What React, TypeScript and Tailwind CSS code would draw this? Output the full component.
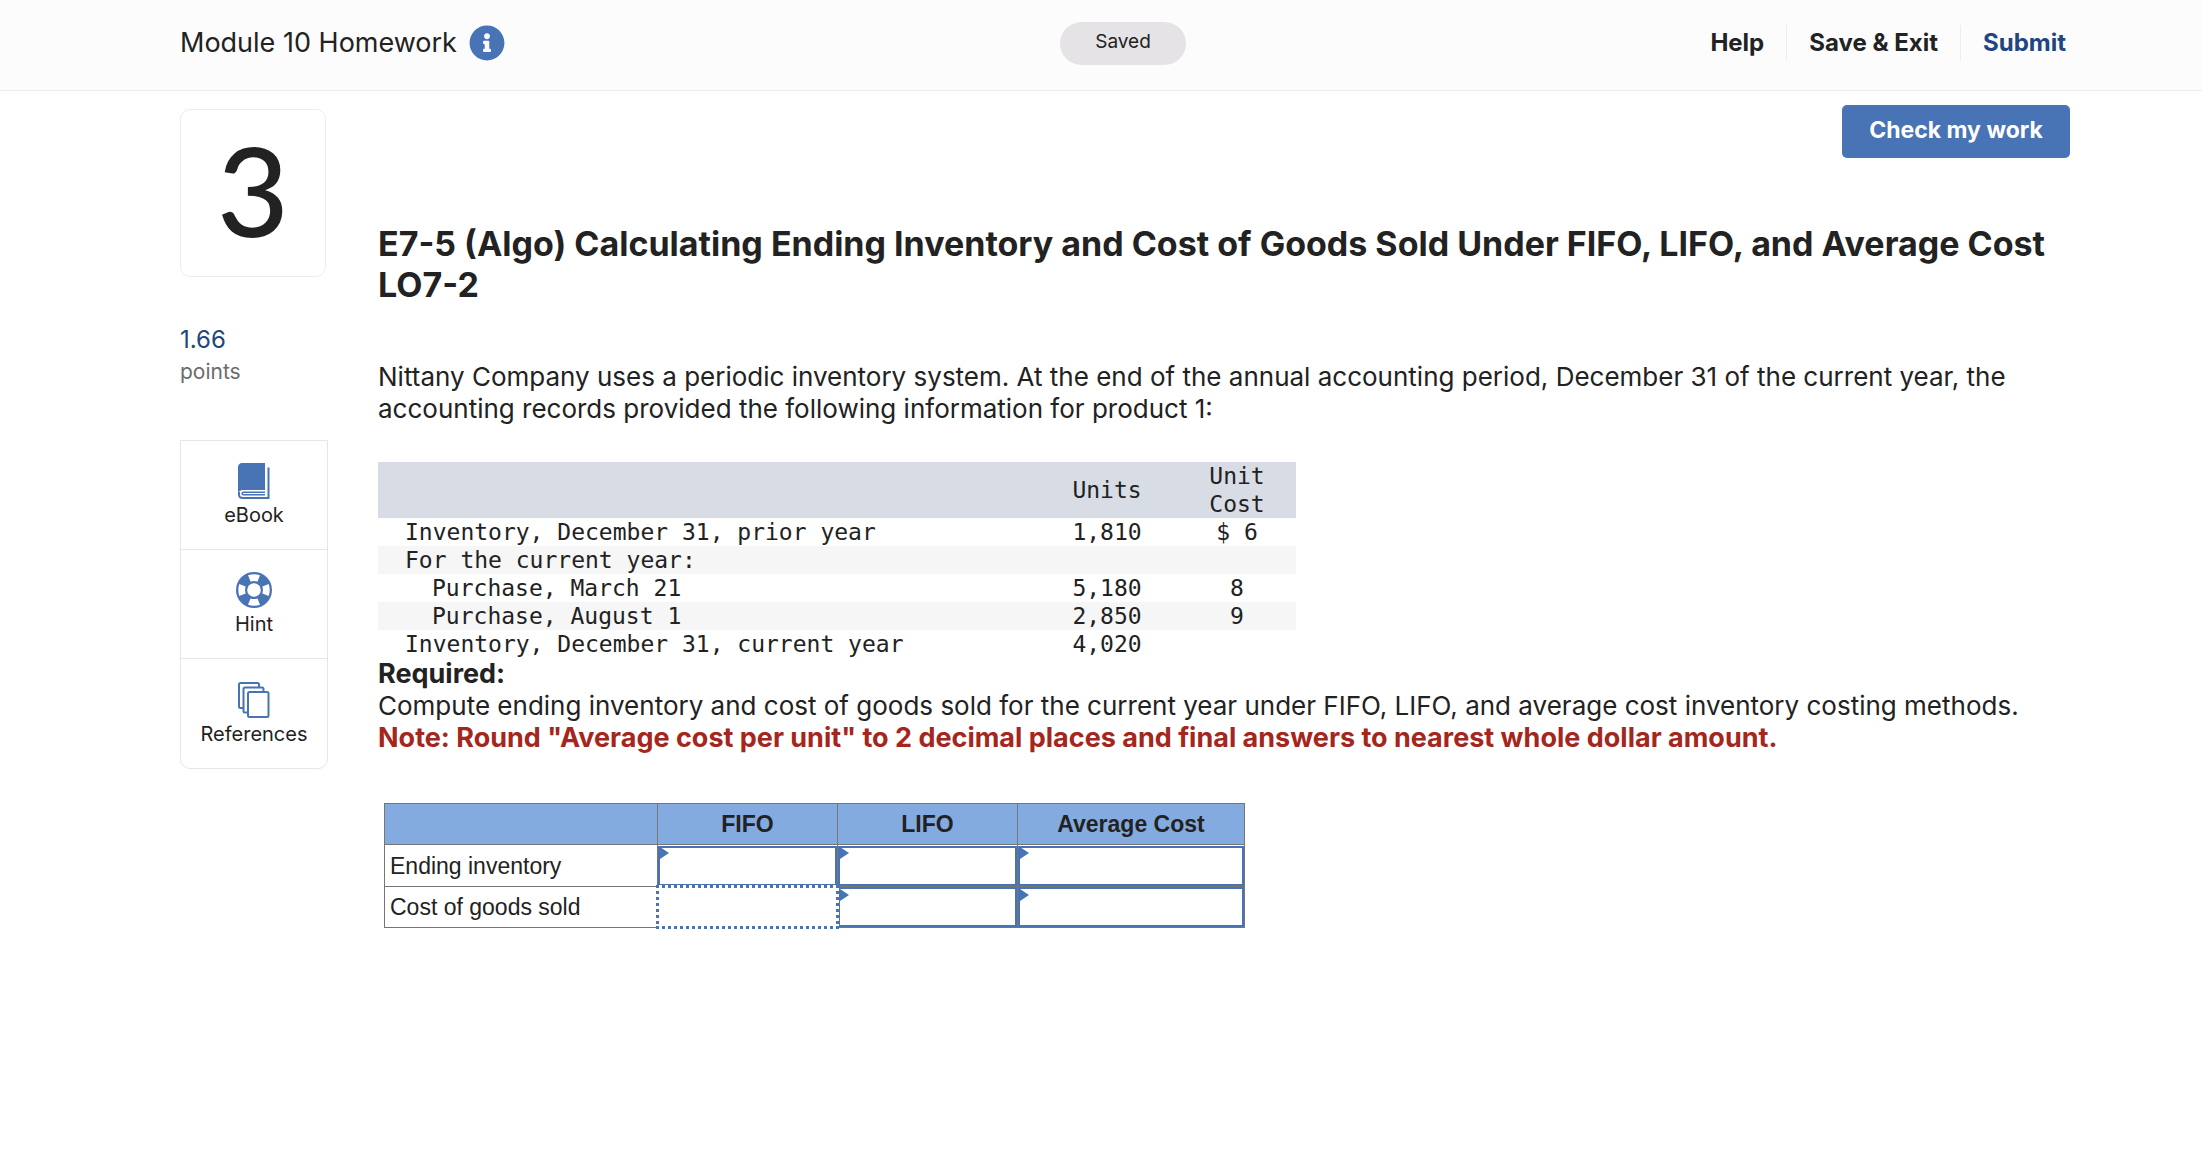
import type { ReactNode } from 'react';
import { FaInfoCircle } from 'react-icons/fa';

interface LedgerRow {
  label: string;
  indent?: boolean;
  units?: string;
  cost?: string;
}

const LEDGER: LedgerRow[] = [
  { label: 'Inventory, December 31, prior year', units: '1,810', cost: '$ 6' },
  { label: 'For the current year:' },
  { label: 'Purchase, March 21', indent: true, units: '5,180', cost: '8' },
  { label: 'Purchase, August 1', indent: true, units: '2,850', cost: '9' },
  { label: 'Inventory, December 31, current year', units: '4,020' },
];

const METHODS = ['FIFO', 'LIFO', 'Average Cost'];
const ANSWER_ROWS = ['Ending inventory', 'Cost of goods sold'];

export default function App() {
  return (
    <div className="min-h-screen bg-white text-[#222] font-[Inter,sans-serif]">
      <Header />
      <main className="flex gap-[50px] pl-[180px] pr-[132px] pb-16">
        <Sidebar />
        <Question />
      </main>
    </div>
  );
}

// ─── Header ──────────────────────────────────────────────────────────────────

function Header() {
  return (
    <header className="grid grid-cols-[1fr_auto_1fr] items-center h-[91px] pl-[180px] pr-34 pb-1 bg-[#fcfcfc] border-b border-[#ededed]">
      <div className="flex items-center gap-3">
        <h1 className="text-[27px] leading-9">Module 10 Homework</h1>
        <button type="button" aria-label="Assignment information" className="rounded-full text-[#4874b5]">
          <FaInfoCircle className="w-9 h-9" />
        </button>
      </div>
      <span role="status" className="w-[126px] h-[43px] pb-0.5 flex items-center justify-center rounded-full bg-[#e5e3e6] text-[19px]">
        Saved
      </span>
      <nav className="flex justify-end text-2xl leading-9 font-bold">
        <button type="button" className="px-[22px]">Help</button>
        <button type="button" className="px-[22px] border-l border-[#ededed]">Save &amp; Exit</button>
        <button type="button" className="pl-[22px] border-l border-[#ededed] text-[#21457f]">Submit</button>
      </nav>
    </header>
  );
}

// ─── Sidebar ─────────────────────────────────────────────────────────────────

function Sidebar() {
  return (
    <aside className="w-[148px] shrink-0 pt-[18px]">
      <div className="w-[146px] h-[168px] pb-2 flex items-center justify-center border border-[#ededed] rounded-[10px] text-[124px] leading-none font-medium font-[Lato,sans-serif]">
        3
      </div>
      <p className="mt-[47px] text-2xl leading-8 text-[#21457f]">1.66</p>
      <p className="text-[21px] leading-8 text-[#6b6b6b]">points</p>
      <div className="mt-[52px] border border-[#e6e6e6] rounded-b-[10px] divide-y divide-[#e6e6e6]">
        <ToolButton label="eBook"><BookIcon /></ToolButton>
        <ToolButton label="Hint"><RingIcon /></ToolButton>
        <ToolButton label="References"><PagesIcon /></ToolButton>
      </div>
    </aside>
  );
}

function ToolButton({ label, children }: { label: string; children: ReactNode }) {
  return (
    <button type="button" className="w-full h-[109px] pt-2 pb-1 flex flex-col items-center justify-center text-xl leading-8">
      {children}
      {label}
    </button>
  );
}

function BookIcon() {
  return (
    <svg viewBox="0 0 36 36" className="w-9 h-9" aria-hidden="true">
      <path fill="#4874b5" d="M6 0H29V27H7.5C4.500 27 2 29 2 31V4C2 1.800 3.800 0 6 0Z" />
      <path fill="none" stroke="#4874b5" strokeWidth="2" d="M32.500 4.500V35H7C4.500 35 3 33.500 3 31.500V29" />
      <path fill="#fff" d="M7.500 27H29V33H7.500C3.500 33 3.500 27 7.500 27Z" />
      <path fill="none" stroke="#4874b5" strokeWidth="1.500" d="M29 29.200H7.500C5.600 29.200 5.600 31.800 7.500 31.800H29" />
    </svg>
  );
}

function RingIcon() {
  return (
    <svg viewBox="0 0 36 36" className="w-9 h-9" aria-hidden="true">
      <circle cx="18" cy="18" r="18" fill="#4874b5" />
      {[0, 90, 180, 270].map((deg) => (
        <path key={deg} fill="#fff" transform={`rotate(${deg} 18 18)`} d="M12 3.300Q18 1.300 24 3.300L21.500 9.600Q18 8.400 14.500 9.600Z" />
      ))}
      <circle cx="18" cy="18" r="6.800" fill="#fff" />
    </svg>
  );
}

function PagesIcon() {
  return (
    <svg viewBox="0 0 36 36" className="w-9 h-9" aria-hidden="true" fill="#fff" stroke="#4874b5" strokeWidth="2">
      <rect x="3" y="1" width="20" height="25" rx="1.500" />
      <rect x="7.500" y="5.500" width="20" height="25" rx="1.500" />
      <rect x="12" y="10" width="20.500" height="25" rx="1.500" />
    </svg>
  );
}

// ─── Question ────────────────────────────────────────────────────────────────

function Question() {
  return (
    <section className="flex-1 min-w-0 pt-3.5">
      <div className="flex justify-end">
        <button type="button" className="w-[228px] h-[53px] pb-0.5 rounded-[5px] bg-[#4874b5] text-white text-[23px] font-bold">
          Check my work
        </button>
      </div>
      <h2 className="mt-[65px] text-[34px] leading-[41px] font-bold">
        E7-5 (Algo) Calculating Ending Inventory and Cost of Goods Sold Under FIFO, LIFO, and Average Cost LO7-2
      </h2>
      <p className="mt-14 text-[26px] leading-8">
        Nittany Company uses a periodic inventory system. At the end of the annual accounting period, December 31 of the current year, the
        accounting records provided the following information for product 1:
      </p>
      <LedgerTable />
      <p className="text-[27px] leading-8 font-bold">Required:</p>
      <p className="text-[26px] leading-8">
        Compute ending inventory and cost of goods sold for the current year under FIFO, LIFO, and average cost inventory costing methods.
      </p>
      <p className="text-[27px] leading-8 font-bold text-[#a4261d]">
        Note: Round "Average cost per unit" to 2 decimal places and final answers to nearest whole dollar amount.
      </p>
      <AnswerTable />
    </section>
  );
}

function LedgerTable() {
  return (
    <table className="mt-[37px] w-[918px] table-fixed font-['DejaVu_Sans_Mono',monospace] text-[23px] leading-7">
      <colgroup>
        <col />
        <col className="w-[142px]" />
        <col className="w-[118px]" />
      </colgroup>
      <thead>
        <tr className="bg-[#d8dce5]">
          <td />
          <th scope="col" className="font-normal">Units</th>
          <th scope="col" className="font-normal">Unit<br />Cost</th>
        </tr>
      </thead>
      <tbody>
        {LEDGER.map((row) => (
          <tr key={row.label} className="h-7 even:bg-[#f6f6f6]">
            <th scope="row" className={`text-left font-normal ${row.indent ? 'pl-[54px]' : 'pl-[27px]'}`}>{row.label}</th>
            <td className="text-center">{row.units}</td>
            <td className="text-center">{row.cost}</td>
          </tr>
        ))}
      </tbody>
    </table>
  );
}

// ─── Answer grid ─────────────────────────────────────────────────────────────

function AnswerTable() {
  return (
    <table className="mt-[49px] ml-1.5 w-[861px] table-fixed border-collapse font-['Liberation_Sans',Arial,sans-serif] text-[23px] leading-7">
      <colgroup>
        <col className="w-[273px]" />
        <col className="w-[180px]" />
        <col className="w-[180px]" />
        <col />
      </colgroup>
      <thead>
        <tr className="h-[41px] bg-[#84abdf]">
          <td className="border border-[#767676]" />
          {METHODS.map((m) => <th key={m} scope="col" className="border border-[#767676] font-bold">{m}</th>)}
        </tr>
      </thead>
      <tbody>
        {ANSWER_ROWS.map((row) => (
          <tr key={row} className="h-[41px] first:h-[42px]">
            <th scope="row" className="border border-[#767676] pl-[5px] text-left font-normal">{row}</th>
            {METHODS.map((m) => (
              <AnswerCell key={m} label={`${row}, ${m}`} active={row === 'Cost of goods sold' && m === 'FIFO'} />
            ))}
          </tr>
        ))}
      </tbody>
    </table>
  );
}

function AnswerCell({ label, active }: { label: string; active: boolean }) {
  return (
    <td className="relative p-0 border border-[#767676]">
      <input
        type="text"
        aria-label={label}
        className={`block w-full h-10 px-3 text-right outline-none ${active ? '' : 'border-2 border-[#4874b5]'}`}
      />
      {active ? <SelectionRing /> : (
        <svg viewBox="0 0 9 12" className="absolute left-0.5 top-0.5 w-[9px] h-3" aria-hidden="true">
          <path fill="#4874b5" d="M0 0L9 6L0 12Z" />
        </svg>
      )}
    </td>
  );
}

// Dotted marker round the selected cell, laid over the cell borders
function SelectionRing() {
  return (
    <span className="absolute -inset-0.5 z-10 border-[3px] border-white pointer-events-none">
      <svg className="absolute -inset-[3px] w-[calc(100%+6px)] h-[calc(100%+6px)]" stroke="#4874b5" strokeWidth="3" strokeDasharray="3" aria-hidden="true">
        <line x1="0" y1="1.500" x2="100%" y2="1.500" />
        <line x1="1.500" y1="0" x2="1.500" y2="100%" />
        <line x1="0" y1="100%" x2="100%" y2="100%" strokeWidth="6" />
        <line x1="100%" y1="0" x2="100%" y2="100%" strokeWidth="6" />
      </svg>
    </span>
  );
}
